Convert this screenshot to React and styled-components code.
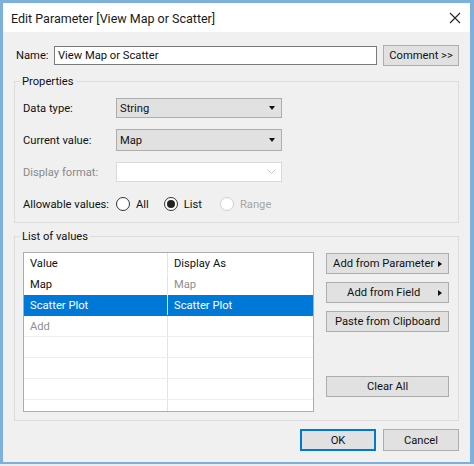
import React from "react";
import styled, { createGlobalStyle } from "styled-components";

const Global = createGlobalStyle`
  html, body { margin: 0; padding: 0; }
  body { background: #e9e9e9; font-family: Roboto, "Noto Sans", sans-serif; }
  * { box-sizing: border-box; }
`;

const Page = styled.div`
  width: 474px;
  height: 466px;
  display: flex;
  flex-direction: column;
  overflow: hidden;
`;

const Desktop = styled.div`
  background: #7eb0dc;
  padding: 3px 4px 2px 3px;
`;

const Window = styled.div`
  display: flex;
  flex-direction: column;
  background: #f0f0f0;
`;

const TitleBar = styled.div`
  height: 29px;
  background: #ffffff;
  display: flex;
  align-items: center;
  justify-content: space-between;
  padding: 1px 9px 0 8px;
  font-size: 12.5px;
  color: #1a1a1a;
`;

const CloseIcon = () => (
  <svg width="12" height="12" viewBox="0 0 12 12">
    <path d="M1 1 L11 11 M11 1 L1 11" stroke="#222" strokeWidth="1.1" fill="none" />
  </svg>
);

const Body = styled.div`
  height: 430px;
  padding: 13px 11px 0 11px;
  display: flex;
  flex-direction: column;
  font-size: 11.2px;
  color: #111;
`;

const NameRow = styled.div`
  display: flex;
  align-items: center;
  height: 21px;
  gap: 6px;
`;

const NameLabel = styled.span`
  flex-shrink: 0;
  width: 32px;
  margin-left: 2px;
`;

const TextInput = styled.div`
  flex: 1;
  height: 19px;
  background: #fff;
  border: 1px solid #7a7a7a;
  display: flex;
  align-items: center;
  padding-left: 3px;
`;

const Button = styled.div`
  position: relative;
  flex-shrink: 0;
  height: ${(p) => p.$h || 21}px;
  width: ${(p) => (p.$w ? `${p.$w}px` : "auto")};
  background: #e1e1e1;
  border: 1px solid ${(p) => (p.$default ? "#0078d7" : "#adadad")};
  box-shadow: ${(p) => (p.$default ? "inset 0 0 0 1px #0078d7" : "none")};
  display: flex;
  align-items: center;
  justify-content: center;
  padding-right: ${(p) => (p.$arrow ? "8px" : "0")};
  color: #111;
  white-space: nowrap;
`;

const ArrowRight = styled.span`
  position: absolute;
  right: 6px;
  top: 50%;
  margin-top: -3px;
  width: 0;
  height: 0;
  border-top: 3px solid transparent;
  border-bottom: 3px solid transparent;
  border-left: 4px solid #111;
`;

const Group = styled.fieldset`
  margin: ${(p) => p.$mt}px 0 0 0;
  border: 1px solid #dcdcdc;
  padding: ${(p) => p.$pt}px 9px ${(p) => p.$pb}px 8px;
  min-width: 0;
`;

const Legend = styled.legend`
  margin-left: -3px;
  padding: 0 2px;
  line-height: 17px;
  color: #111;
`;

const PropRows = styled.div`
  display: flex;
  flex-direction: column;
  gap: 10px;
`;

const PropRow = styled.div`
  display: flex;
  align-items: center;
  height: 22px;
`;

const PropLabel = styled.span`
  flex-shrink: 0;
  width: 93px;
  white-space: nowrap;
  color: ${(p) => (p.$disabled ? "#8a8a8a" : "#111")};
`;

const Select = styled.div`
  position: relative;
  width: 166px;
  height: ${(p) => p.$h || 20}px;
  background: ${(p) => (p.$disabled ? "#ffffff" : "#e1e1e1")};
  border: 1px solid ${(p) => (p.$disabled ? "#d9d9d9" : "#adadad")};
  display: flex;
  align-items: center;
  padding-left: 3px;
`;

const DropArrow = styled.span`
  position: absolute;
  right: 6px;
  top: 50%;
  margin-top: -2px;
  width: 0;
  height: 0;
  border-left: 3.5px solid transparent;
  border-right: 3.5px solid transparent;
  border-top: 4px solid #111;
`;

const ChevronBox = styled.span`
  position: absolute;
  right: 5px;
  top: 6px;
  display: flex;
`;

const Chevron = () => (
  <ChevronBox>
    <svg width="9" height="6" viewBox="0 0 9 6">
      <path d="M0.5 0.5 L4.5 4.5 L8.5 0.5" stroke="#c4c4c4" strokeWidth="1" fill="none" />
    </svg>
  </ChevronBox>
);

const RadioGroup = styled.div`
  display: flex;
  align-items: center;
`;

const RadioItem = styled.label`
  display: flex;
  align-items: center;
  gap: 6px;
  margin-right: ${(p) => p.$mr}px;
  color: ${(p) => (p.$disabled ? "#a6a6a6" : "#111")};
`;

const RadioCircle = styled.span`
  width: 14px;
  height: 14px;
  border-radius: 50%;
  border: 1px solid ${(p) => (p.$disabled ? "#cfcfcf" : "#333")};
  background: #fff;
  display: flex;
  align-items: center;
  justify-content: center;
  &::after {
    content: "";
    width: 8px;
    height: 8px;
    border-radius: 50%;
    background: ${(p) => (p.$checked ? "#222" : "transparent")};
  }
`;

const ListArea = styled.div`
  display: flex;
  gap: 12px;
`;

const Table = styled.div`
  width: 292px;
  height: 160px;
  background: #fff;
  border: 1px solid #adadad;
  overflow: hidden;
  display: flex;
  flex-direction: column;
`;

const Row = styled.div`
  display: grid;
  grid-template-columns: 144px 1fr;
  height: 21px;
  flex-shrink: 0;
  background: ${(p) => (p.$selected ? "#0078d7" : "#fff")};
  color: ${(p) => (p.$selected ? "#fff" : "#111")};
  border-bottom: 1px solid ${(p) => (p.$line ? "#eeeeee" : "transparent")};
`;

const Cell = styled.div`
  display: flex;
  align-items: center;
  padding-left: 6px;
  border-right: ${(p) => (p.$first ? "1px solid #e3e3e3" : "none")};
  color: ${(p) => (p.$muted ? "#8f8f8f" : "inherit")};
`;

const SideButtons = styled.div`
  width: 123px;
  display: flex;
  flex-direction: column;
  gap: 8px;
  padding-top: 1px;
`;

const Spacer = styled.div`
  height: 28px;
`;

const Footer = styled.div`
  display: flex;
  justify-content: flex-end;
  gap: 7px;
  margin-top: 8px;
`;

const BottomStrip = styled.div`
  flex: 1;
  background: #ececec;
`;

export default function App() {
  const rows = [
    { v: "Value", d: "Display As" },
    { v: "Map", d: "Map", dMuted: true },
    { v: "Scatter Plot", d: "Scatter Plot", selected: true },
    { v: "Add", d: "", vMuted: true, line: true },
    { v: "", d: "", line: true },
    { v: "", d: "", line: true },
    { v: "", d: "", line: true },
    { v: "", d: "" },
  ];
  return (
    <Page>
      <Global />
      <Desktop>
        <Window>
          <TitleBar>
            <span>Edit Parameter [View Map or Scatter]</span>
            <CloseIcon />
          </TitleBar>
          <Body>
            <NameRow>
              <NameLabel>Name:</NameLabel>
              <TextInput>View Map or Scatter</TextInput>
              <Button $w={76}>Comment &gt;&gt;</Button>
            </NameRow>

            <Group $mt={7} $pt={7} $pb={7}>
              <Legend>Properties</Legend>
              <PropRows>
                <PropRow>
                  <PropLabel>Data type:</PropLabel>
                  <Select>
                    String
                    <DropArrow />
                  </Select>
                </PropRow>
                <PropRow>
                  <PropLabel>Current value:</PropLabel>
                  <Select $h={22}>
                    Map
                    <DropArrow />
                  </Select>
                </PropRow>
                <PropRow>
                  <PropLabel $disabled>Display format:</PropLabel>
                  <Select $disabled>
                    <Chevron />
                  </Select>
                </PropRow>
                <PropRow>
                  <PropLabel>Allowable values:</PropLabel>
                  <RadioGroup>
                    <RadioItem $mr={15}>
                      <RadioCircle />
                      All
                    </RadioItem>
                    <RadioItem $mr={18}>
                      <RadioCircle $checked />
                      List
                    </RadioItem>
                    <RadioItem $mr={0} $disabled>
                      <RadioCircle $disabled />
                      Range
                    </RadioItem>
                  </RadioGroup>
                </PropRow>
              </PropRows>
            </Group>

            <Group $mt={5} $pt={7} $pb={8}>
              <Legend>List of values</Legend>
              <ListArea>
                <Table>
                  {rows.map((r, i) => (
                    <Row key={i} $selected={r.selected} $line={r.line}>
                      <Cell $first $muted={r.vMuted}>{r.v}</Cell>
                      <Cell $muted={r.dMuted}>{r.d}</Cell>
                    </Row>
                  ))}
                </Table>
                <SideButtons>
                  <Button $arrow>
                    Add from Parameter
                    <ArrowRight />
                  </Button>
                  <Button $arrow>
                    Add from Field
                    <ArrowRight />
                  </Button>
                  <Button>Paste from Clipboard</Button>
                  <Spacer />
                  <Button>Clear All</Button>
                </SideButtons>
              </ListArea>
            </Group>

            <Footer>
              <Button $w={76} $h={22} $default>OK</Button>
              <Button $w={76} $h={22}>Cancel</Button>
            </Footer>
          </Body>
        </Window>
      </Desktop>
      <BottomStrip />
    </Page>
  );
}
